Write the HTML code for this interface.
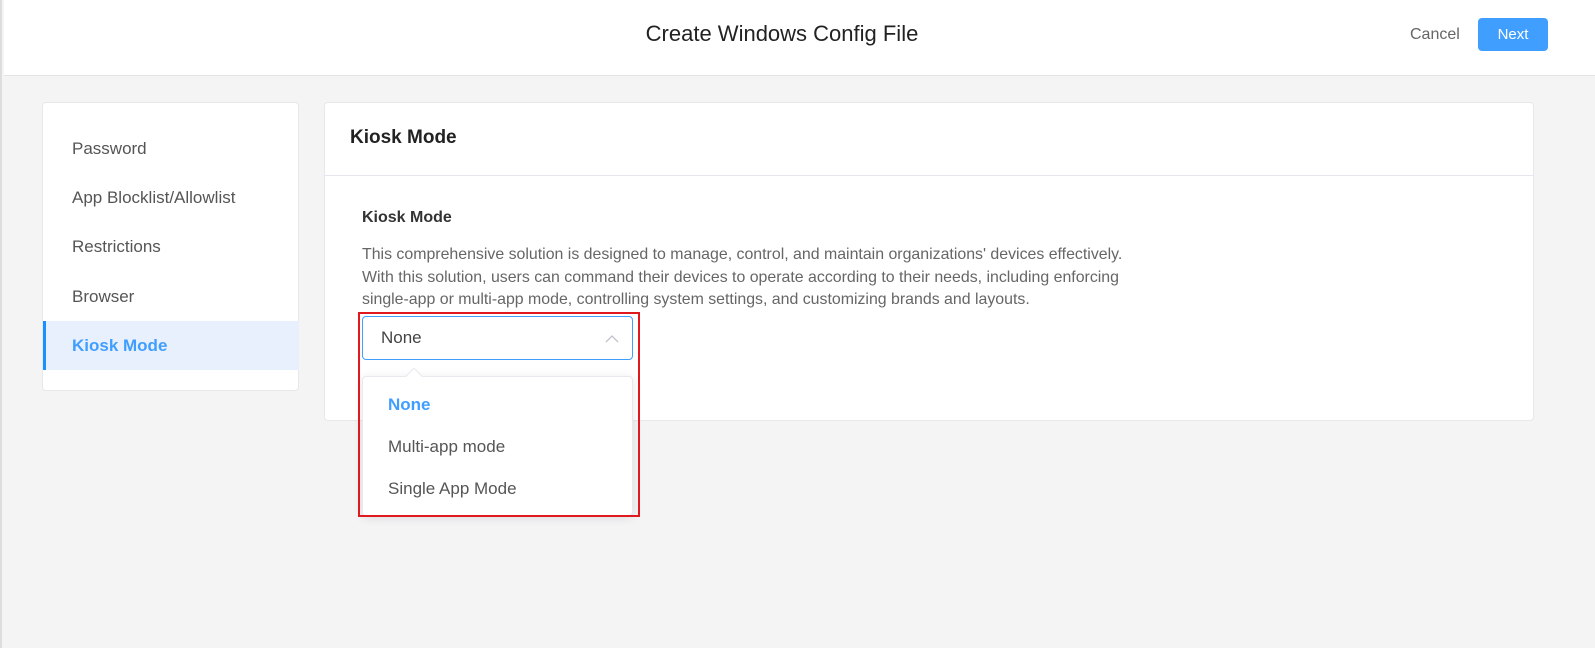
<!DOCTYPE html>
<html><head><style>
*{box-sizing:border-box;margin:0;padding:0}
body{width:1595px;height:648px;background:#f4f4f5;font-family:"Liberation Sans",Arial,sans-serif;position:relative;overflow:hidden;border-left:2px solid #ddd}
.hdr{position:absolute;left:2px;top:0;width:1593px;height:76px;background:#fff;border-bottom:1px solid #e4e4e7}
.title{position:absolute;left:0;width:1556px;top:21px;text-align:center;font-size:22px;color:#222}
.cancel{position:absolute;left:1406px;top:26px;font-size:16px;color:#666}
.next{position:absolute;left:1474px;top:18px;width:70px;height:33px;background:#409eff;border-radius:4px;color:#fff;font-size:15px;text-align:center;line-height:33px}
.side{position:absolute;left:40px;top:102px;width:257px;height:289px;background:#fff;border:1px solid #e8e8e8;border-radius:4px}
.side .it{position:absolute;left:29px;font-size:17px;color:#555}
.side .act{position:absolute;left:0;top:218px;width:256px;height:49px;background:#e8f0fd;border-left:3px solid #1890ff}
.card{position:absolute;left:322px;top:102px;width:1210px;height:319px;background:#fff;border:1px solid #e8e8e8;border-radius:4px}
.ch{height:73px;border-bottom:1px solid #e6e6ef;padding:24px 25px;font-size:19px;font-weight:bold;color:#222}
.h2{position:absolute;left:37px;top:106px;font-size:16px;font-weight:bold;color:#333}
.desc{position:absolute;left:37px;top:141px;font-size:15.9px;line-height:22.5px;color:#666;width:900px}
.sel{position:absolute;left:360px;top:316px;width:271px;height:44px;border:1px solid #409eff;border-radius:4px;background:#fff;font-size:17px;color:#444;padding:11px 18px}
.dd{position:absolute;left:360px;top:376px;width:271px;height:140px;background:#fff;border:1px solid #e8e8ee;border-radius:4px;box-shadow:0 2px 10px rgba(0,0,0,.1)}
.dd div{position:absolute;left:25px;font-size:17px;color:#555}
.red{position:absolute;left:356px;top:312px;width:282px;height:205px;border:2px solid #e0191f}
</style></head><body>
<div class="hdr"><div class="title">Create Windows Config File</div><div class="cancel">Cancel</div><div class="next">Next</div></div>
<div class="side"><div class="act"></div>
<div class="it" style="top:36px">Password</div>
<div class="it" style="top:85px">App Blocklist/Allowlist</div>
<div class="it" style="top:134px">Restrictions</div>
<div class="it" style="top:184px">Browser</div>
<div class="it" style="top:233px;color:#409eff;font-weight:bold">Kiosk Mode</div></div>
<div class="card"><div class="ch">Kiosk Mode</div>
<div class="h2">Kiosk Mode</div>
<div class="desc">This comprehensive solution is designed to manage, control, and maintain organizations' devices effectively.<br>With this solution, users can command their devices to operate according to their needs, including enforcing<br>single-app or multi-app mode, controlling system settings, and customizing brands and layouts.</div></div>
<div class="sel">None<svg style="position:absolute;left:242px;top:17px" width="14" height="9"><path d="M1 8L7 2L13 8" fill="none" stroke="#c0c4cc" stroke-width="1.3"/></svg></div>
<div class="dd"><div style="top:18px;color:#409eff;font-weight:bold">None</div><div style="top:60px">Multi-app mode</div><div style="top:102px">Single App Mode</div></div>
<div style="position:absolute;left:406px;top:370px;width:12px;height:12px;background:#fff;border-left:1px solid #e8e8ee;border-top:1px solid #e8e8ee;transform:rotate(45deg)"></div>
<div class="red"></div>
</body></html>
